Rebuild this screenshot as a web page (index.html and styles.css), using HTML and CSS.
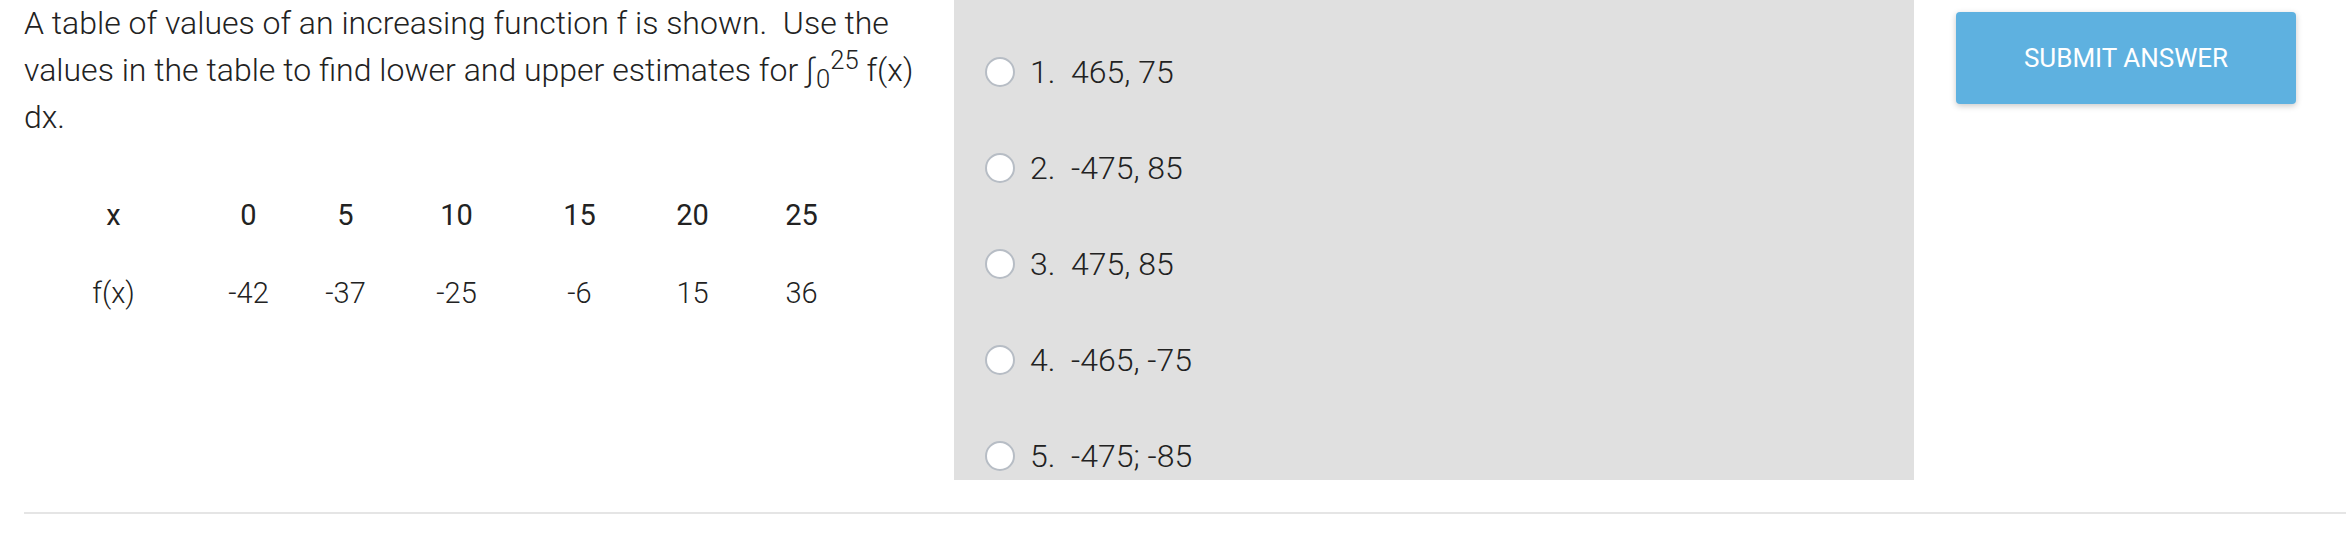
FILE: index.html
```html
<!DOCTYPE html>
<html>
<head>
<meta charset="utf-8">
<link rel="stylesheet" href="styles.css">
</head>
<body>
<div class="page">
  <div class="row">
    <div class="question">
      <p class="prompt">A table of values of an increasing function f is shown.&nbsp; Use the values in the table to find lower and upper estimates for ∫<sub>0</sub><sup>25</sup> f(x) dx.</p>
      <table class="values">
        <colgroup>
          <col class="c0"><col class="c1"><col class="c2"><col class="c3"><col class="c4"><col class="c5"><col class="c6">
        </colgroup>
        <thead>
          <tr><th>x</th><th>0</th><th>5</th><th>10</th><th>15</th><th>20</th><th>25</th></tr>
        </thead>
        <tbody>
          <tr><td>f(x)</td><td>-42</td><td>-37</td><td>-25</td><td>-6</td><td>15</td><td>36</td></tr>
        </tbody>
      </table>
    </div>
    <div class="choices">
      <label class="choice"><span class="radio"></span><span class="text">1.&nbsp; 465, 75</span></label>
      <label class="choice"><span class="radio"></span><span class="text">2.&nbsp; -475, 85</span></label>
      <label class="choice"><span class="radio"></span><span class="text">3.&nbsp; 475, 85</span></label>
      <label class="choice"><span class="radio"></span><span class="text">4.&nbsp; -465, -75</span></label>
      <label class="choice"><span class="radio"></span><span class="text">5.&nbsp; -475; -85</span></label>
    </div>
    <div class="actions">
      <button class="submit">SUBMIT ANSWER</button>
    </div>
  </div>
  <hr class="divider">
</div>
</body>
</html>
```

FILE: styles.css
```css
html, body {
  margin: 0;
  padding: 0;
  background: #ffffff;
}
body {
  font-family: Roboto, "Liberation Sans", sans-serif;
  color: #222222;
  width: 2346px;
  height: 540px;
  overflow: hidden;
}
.page {
  display: flex;
  flex-direction: column;
}
.row {
  display: flex;
  flex-direction: row;
  align-items: flex-start;
  height: 480px;
}
.question {
  width: 930px;
  padding-left: 24px;
  flex: none;
}
.prompt {
  margin: 0;
  font-size: 32px;
  font-weight: 300;
  line-height: 47px;
  width: 905px;
}
.prompt sub, .prompt sup {
  font-size: 0.8em;
  line-height: 0;
}
.prompt sub {
  margin-left: 2px;
}
.values {
  border-collapse: collapse;
  margin-top: 35px;
  margin-left: 3px;
  table-layout: fixed;
}
.values th, .values td {
  height: 78px;
  padding: 0;
  text-align: center;
  font-size: 29px;
  vertical-align: middle;
}
.values th { font-weight: 400; }
.values td { font-weight: 300; }
.c0 { width: 173px; }
.c1 { width: 97px; }
.c2 { width: 97px; }
.c3 { width: 125px; }
.c4 { width: 121px; }
.c5 { width: 105px; }
.c6 { width: 113px; }
.choices {
  width: 960px;
  height: 480px;
  flex: none;
  background: #e0e0e0;
  box-sizing: border-box;
  padding: 48px 0 0 31px;
  display: flex;
  flex-direction: column;
  gap: 48px;
}
.choice {
  display: flex;
  align-items: center;
  height: 48px;
  gap: 15px;
}
.radio {
  width: 26px;
  height: 26px;
  border: 2px solid #b7bdc5;
  border-radius: 50%;
  background: #ffffff;
  flex: none;
}
.text {
  font-size: 32px;
  font-weight: 300;
  color: #222222;
}
.actions {
  flex: 1;
  padding: 12px 0 0 42px;
}
.submit {
  width: 340px;
  height: 92px;
  border: none;
  border-radius: 4px;
  background: #5eb1e0;
  color: #ffffff;
  font-family: Roboto, "Liberation Sans", sans-serif;
  font-size: 26px;
  font-weight: 400;
  box-shadow: 0 2px 6px rgba(0, 0, 0, 0.22);
  padding: 0;
}
.divider {
  margin: 32px 0 0 24px;
  border: none;
  height: 2px;
  background: #e5e5e5;
}
```
